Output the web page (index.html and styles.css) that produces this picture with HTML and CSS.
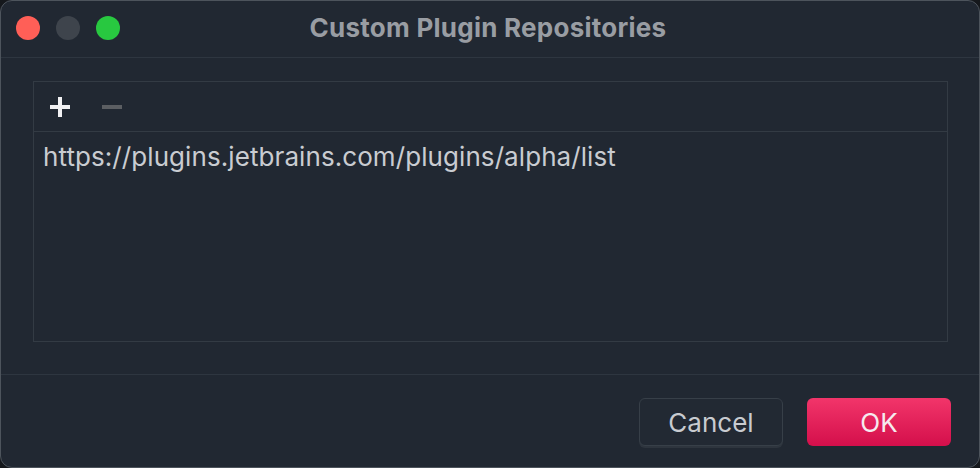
FILE: index.html
```html
<!DOCTYPE html>
<html>
<head>
<meta charset="utf-8">
<link rel="stylesheet" href="styles.css">
</head>
<body>
<div class="window">
  <div class="titlebar">
    <div class="lights">
      <span class="light red"></span>
      <span class="light gray"></span>
      <span class="light green"></span>
    </div>
    <div class="title">Custom Plugin Repositories</div>
  </div>
  <div class="content">
    <div class="panel">
      <div class="toolbar">
        <span class="tool plus"></span>
        <span class="tool minus"></span>
      </div>
      <div class="list">
        <div class="item">https://plugins.jetbrains.com/plugins/alpha/list</div>
      </div>
    </div>
  </div>
  <div class="footer">
    <button class="btn cancel">Cancel</button>
    <button class="btn ok">OK</button>
  </div>
</div>
</body>
</html>
```
FILE: styles.css
```css
html, body {
  margin: 0;
  padding: 0;
  background: #15181c;
}
body {
  width: 980px;
  height: 468px;
  overflow: hidden;
  font-family: Inter, "Liberation Sans", sans-serif;
}
.window {
  box-sizing: border-box;
  width: 980px;
  height: 468px;
  background: #212832;
  border: 1px solid #4d545c;
  border-radius: 12px;
  display: flex;
  flex-direction: column;
  overflow: hidden;
}
.titlebar {
  position: relative;
  height: 56px;
  border-bottom: 1px solid #2e3640;
  display: flex;
  align-items: center;
  justify-content: center;
  flex: none;
}
.lights {
  position: absolute;
  left: 15px;
  top: 15px;
  display: flex;
  gap: 16px;
}
.light {
  width: 24px;
  height: 24px;
  border-radius: 50%;
  display: block;
}
.red { background: #ff5f57; }
.gray { background: #3e444c; }
.green { background: #28c840; }
.title {
  color: #999da3;
  font-size: 26px;
  font-weight: 700;
  letter-spacing: 0.25px;
  margin-top: -3px;
  margin-left: -4px;
}
.content {
  padding: 23px 31px 32px 32px;
  border-bottom: 1px solid #2e3640;
  flex: none;
}
.panel {
  border: 1px solid #333b44;
  height: 259px;
  display: flex;
  flex-direction: column;
}
.toolbar {
  height: 49px;
  border-bottom: 1px solid #333b44;
  display: flex;
  align-items: center;
  padding-left: 16px;
  gap: 32px;
  flex: none;
}
.tool {
  position: relative;
  width: 20px;
  height: 20px;
  display: block;
}
.plus::before, .plus::after, .minus::before {
  content: "";
  position: absolute;
  background: #f1f1f3;
}
.plus::before {
  left: 0; top: 8px; width: 20px; height: 4px;
}
.plus::after {
  left: 8px; top: 0; width: 4px; height: 20px;
}
.minus::before {
  left: 0; top: 8px; width: 20px; height: 4px;
  background: #5b5e62;
}
.list {
  flex: 1;
  padding: 11px 9px;
}
.item {
  color: #c9ccd1;
  font-size: 26px;
  line-height: 28px;
  letter-spacing: 0.08px;
}
.footer {
  flex: 1;
  display: flex;
  justify-content: flex-end;
  align-items: flex-start;
  padding: 23px 28px 0 0;
  gap: 24px;
}
.btn {
  width: 144px;
  height: 48px;
  border-radius: 6px;
  font-family: Inter, "Liberation Sans", sans-serif;
  font-size: 26px;
  cursor: default;
  padding: 0;
}
.cancel {
  background: #222933;
  border: 1px solid #373f48;
  color: #c8cbd0;
  box-shadow: 0 2px 0 #2e353e;
}
.ok {
  background: linear-gradient(#f2356a, #d40f4b);
  border: none;
  color: #f5eaee;
}
```
